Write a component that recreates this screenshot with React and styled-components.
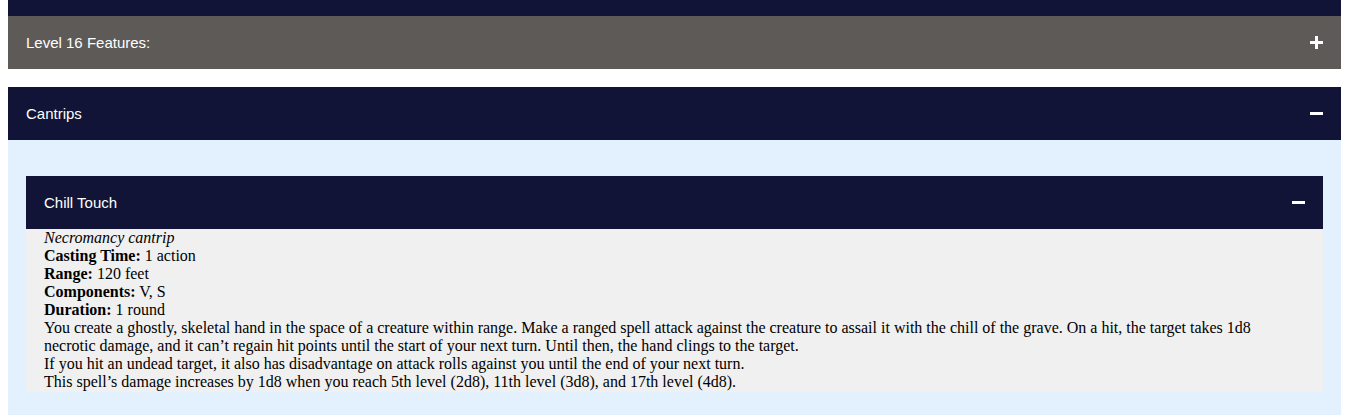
import styled, { createGlobalStyle } from "styled-components";

const GlobalStyle = createGlobalStyle`
  body {
    margin: 0 7px 0 8px;
    background: #ffffff;
    font-family: "Liberation Serif", "Times New Roman", serif;
  }
`;

const Page = styled.div`
  display: flex;
  flex-direction: column;
`;

const PrevTail = styled.div`
  height: 16px;
  background: #111436;
`;

const Section = styled.section`
  display: flex;
  flex-direction: column;
  margin-bottom: ${(p) => (p.$gap ? "18px" : "0")};
`;

const Header = styled.div`
  display: flex;
  align-items: center;
  justify-content: space-between;
  height: 53px;
  padding: 0 18px;
  background: ${(p) => (p.$muted ? "#5e5a58" : "#111436")};
  color: #ffffff;
  font-family: "Liberation Sans", Arial, sans-serif;
  font-size: 15px;
`;

const Panel = styled.div`
  background: #e3f0fd;
  padding: 36px 18px 30px;
`;

const SpellBody = styled.div`
  background: #f0f0f0;
  padding: 0 18px 1px;
  font-size: 16px;
  color: #000000;
`;

const Line = styled.div`
  line-height: 18px;
`;

const School = styled(Line)`
  font-style: italic;
`;

function ToggleIcon({ open }) {
  return (
    <svg width="13" height="13" viewBox="0 0 13 13">
      <rect x="0" y="5" width="13" height="3" fill="#fff" />
      {!open && <rect x="5" y="0" width="3" height="13" fill="#fff" />}
    </svg>
  );
}

function Stat({ label, value }) {
  return (
    <Line>
      <b>{label}:</b> {value}
    </Line>
  );
}

export default function App() {
  return (
    <Page>
      <GlobalStyle />
      <PrevTail />
      <Section $gap>
        <Header $muted>
          <span>Level 16 Features:</span>
          <ToggleIcon open={false} />
        </Header>
      </Section>
      <Section>
        <Header>
          <span>Cantrips</span>
          <ToggleIcon open />
        </Header>
        <Panel>
          <Header>
            <span>Chill Touch</span>
            <ToggleIcon open />
          </Header>
          <SpellBody>
            <School>Necromancy cantrip</School>
            <Stat label="Casting Time" value="1 action" />
            <Stat label="Range" value="120 feet" />
            <Stat label="Components" value="V, S" />
            <Stat label="Duration" value="1 round" />
            <Line>
              You create a ghostly, skeletal hand in the space of a creature within range. Make a ranged spell attack
              against the creature to assail it with the chill of the grave. On a hit, the target takes 1d8 necrotic
              damage, and it can’t regain hit points until the start of your next turn. Until then, the hand clings to
              the target.
            </Line>
            <Line>
              If you hit an undead target, it also has disadvantage on attack rolls against you until the end of your
              next turn.
            </Line>
            <Line>
              This spell’s damage increases by 1d8 when you reach 5th level (2d8), 11th level (3d8), and 17th level
              (4d8).
            </Line>
          </SpellBody>
        </Panel>
      </Section>
    </Page>
  );
}
